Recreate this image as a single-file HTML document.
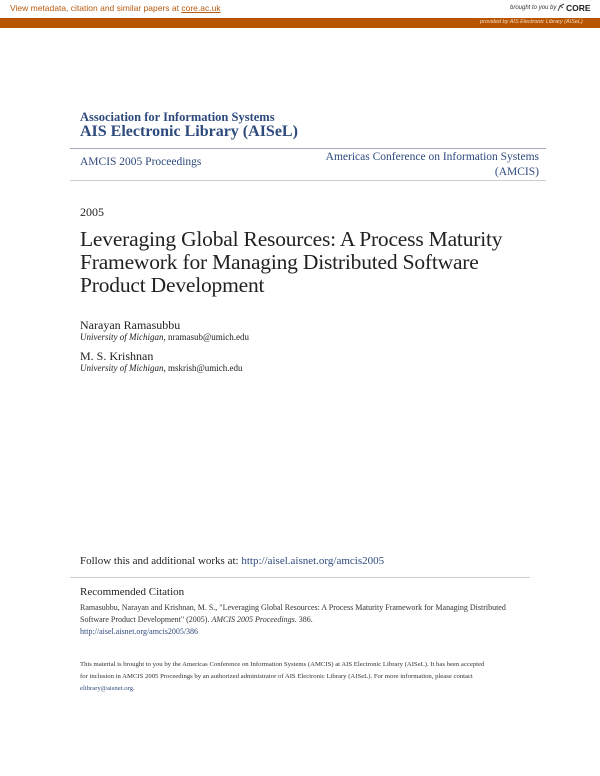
<!DOCTYPE html>
<html><head><meta charset="utf-8"><style>
body{margin:0;width:600px;height:776px;background:#fff;position:relative;font-family:"Liberation Serif",serif;overflow:hidden}
div,span{position:absolute;white-space:nowrap}
.b{color:#2e4a7d}
.s{font-family:"Liberation Sans",sans-serif}
</style></head><body>
<div class="s" style="left:10px;top:3px;font-size:8.5px;color:#b85a10">View metadata, citation and similar papers at <u>core.ac.uk</u></div>
<div class="s" style="left:510px;top:5px;font-size:6px;font-style:italic;color:#333">brought to you by</div>
<svg style="position:absolute;left:556px;top:2px" width="10" height="10"><path d="M2 9 L4 4 L8 2 M4 4 L7 6" stroke="#444" fill="none" stroke-width="1"/></svg>
<div class="s" style="left:566px;top:3px;font-size:8.5px;font-weight:bold;color:#222">CORE</div>
<div style="left:0;top:18px;width:600px;height:10px;background:#b85400"></div>
<div class="s" style="left:480px;top:19px;font-size:5.5px;font-style:italic;color:#f3dcc4">provided by AIS Electronic Library (AISeL)</div>
<div class="b" style="left:80px;top:110px;font-size:12.5px;font-weight:bold">Association for Information Systems</div>
<div class="b" style="left:80px;top:123px;font-size:16px;font-weight:bold">AIS Electronic Library (AISeL)</div>
<div style="left:70px;top:148px;width:476px;height:1px;background:#aab"></div>
<div class="b" style="left:80px;top:156px;font-size:11.5px">AMCIS 2005 Proceedings</div>
<div class="b" style="right:61px;top:150px;font-size:11.5px;text-align:right;line-height:15px">Americas Conference on Information Systems<br>(AMCIS)</div>
<div style="left:70px;top:180px;width:476px;height:1px;background:#ccc"></div>
<div style="left:80px;top:205px;font-size:12px;color:#222">2005</div>
<div style="left:80px;top:228px;font-size:21.5px;line-height:23px;color:#222;letter-spacing:-0.2px">Leveraging Global Resources: A Process Maturity<br>Framework for Managing Distributed Software<br>Product Development</div>
<div style="left:80px;top:318px;font-size:12px;color:#222">Narayan Ramasubbu</div>
<div style="left:80px;top:332px;font-size:9px;color:#222"><i>University of Michigan</i>, nramasub@umich.edu</div>
<div style="left:80px;top:349px;font-size:12px;color:#222">M. S. Krishnan</div>
<div style="left:80px;top:363px;font-size:9px;color:#222"><i>University of Michigan</i>, mskrish@umich.edu</div>
<div style="left:80px;top:555px;font-size:11px;color:#222">Follow this and additional works at: <span class="b" style="position:static">http://aisel.aisnet.org/amcis2005</span></div>
<div style="left:70px;top:577px;width:460px;height:1px;background:#ccc"></div>
<div style="left:80px;top:586px;font-size:11px;color:#222">Recommended Citation</div>
<div style="left:80px;top:602px;font-size:8px;line-height:12px;color:#333">Ramasubbu, Narayan and Krishnan, M. S., "Leveraging Global Resources: A Process Maturity Framework for Managing Distributed<br>Software Product Development" (2005). <i>AMCIS 2005 Proceedings</i>. 386.<br><span class="b" style="position:static">http://aisel.aisnet.org/amcis2005/386</span></div>
<div style="left:80px;top:659px;font-size:6.7px;line-height:12px;color:#333">This material is brought to you by the Americas Conference on Information Systems (AMCIS) at AIS Electronic Library (AISeL). It has been accepted<br>for inclusion in AMCIS 2005 Proceedings by an authorized administrator of AIS Electronic Library (AISeL). For more information, please contact<br><span class="b" style="position:static">elibrary@aisnet.org</span>.</div>
</body></html>
